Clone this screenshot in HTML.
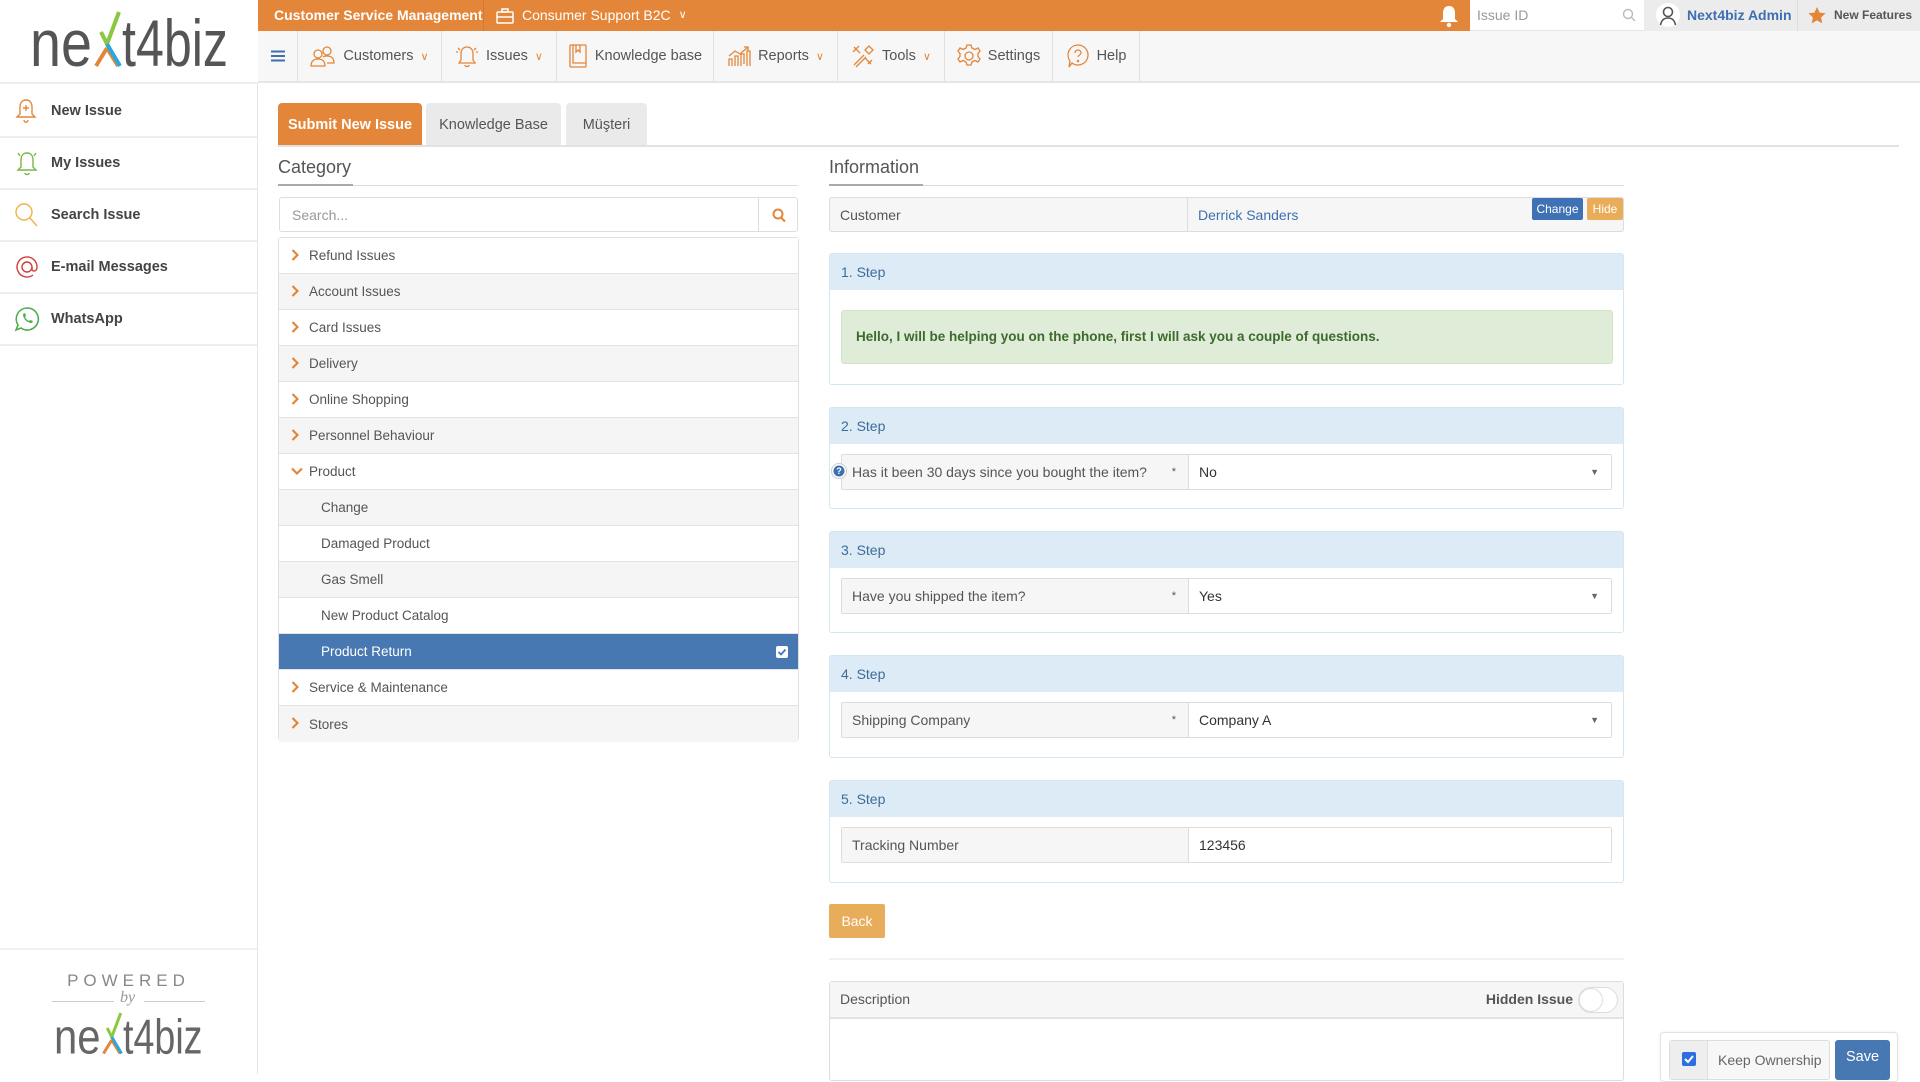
<!DOCTYPE html>
<html><head><meta charset="utf-8">
<style>
*{box-sizing:border-box;margin:0;padding:0}
body{width:1920px;height:1074px;overflow:hidden;background:#fff;font-family:"Liberation Sans",sans-serif;color:#555;position:relative;font-size:14px}
.abs{position:absolute}
.top{left:258px;top:0;width:1212px;height:31px;background:#e4863a}
.nav{left:258px;top:31px;width:1662px;height:52px;background:#f7f7f7;border-bottom:2px solid #e6e6e6}
.ni{position:absolute;top:0;height:50px;border-right:1px solid #e2e2e2;display:flex;align-items:center;justify-content:center;gap:7px;font-size:14.5px;color:#555}
.ni svg{flex:none}
.side{left:0;top:83px;width:258px;height:991px;border-right:1px solid #e6e6e6}
.si{position:absolute;left:0;width:257px;height:52px;border-bottom:2px solid #eee;display:flex;align-items:center;font-size:14.5px;font-weight:bold;color:#444}
.si svg{position:absolute;left:14px}
.si span{position:absolute;left:51px}
.tab{position:absolute;top:103px;height:42px;border-radius:4px 4px 0 0;background:#eaeaea;color:#555;font-size:14.5px;display:flex;align-items:center;justify-content:center;padding-top:2px}
.h{position:absolute;top:157px;font-size:18px;color:#555}
.row{position:absolute;left:279px;width:519px;height:36px;border-bottom:1px solid #e3e3e3;display:flex;align-items:center;font-size:13.5px;color:#555}
.row.g{background:#f5f5f5}.row.w{background:#fff}
.chev{position:absolute;left:12px;top:11px}
.panel{position:absolute;left:829px;width:795px;border:1px solid #d4e6f2;border-radius:3px;background:#fff}
.ph{height:36px;background:#ddebf6;color:#3e6c99;font-size:14px;padding:0 11px;line-height:36px}
.fld{position:absolute;left:11px;width:771px;height:36px;border:1px solid #ddd;border-radius:2px;display:flex}
.fl{width:347px;background:#f6f6f6;border-right:1px solid #ddd;padding-left:10px;line-height:34px;font-size:14px;color:#555;position:relative}
.fl i{position:absolute;right:12px;top:0;font-style:normal;font-size:11px}
.fv{flex:1;padding-left:10px;line-height:34px;font-size:14px;color:#333;position:relative;background:#fff}
.fv b{position:absolute;right:12px;top:0;font-size:9px;color:#666;font-weight:normal}
</style></head><body>

<!-- logo -->
<svg class="abs" style="left:30px;top:8px" width="200" height="64" viewBox="0 0 200 64">
<text x="0" y="58" font-family="Liberation Sans" font-size="66" fill="#555" textLength="62" lengthAdjust="spacingAndGlyphs">ne</text>
<path d="M66 58 L77 40 M77 40 L88 58" stroke="#e4863a" stroke-width="4" fill="none"/>
<path d="M71 24 L77 36 L89 4" stroke="#8dc63f" stroke-width="4" fill="none"/>
<path d="M77 36 L90 58" stroke="#29a8e0" stroke-width="4" fill="none"/>
<text x="92" y="58" font-family="Liberation Sans" font-size="66" fill="#555" textLength="106" lengthAdjust="spacingAndGlyphs">t4biz</text>
</svg>
<div class="abs" style="left:0;top:82px;width:258px;height:2px;background:#eee"></div>

<!-- top bar -->
<div class="abs top"></div>
<div class="abs" style="left:258px;top:0;width:226px;height:31px;border-right:1px solid #d57a30;color:#fff;font-size:14px;font-weight:bold;line-height:31px;padding-left:16px">Customer Service Management</div>
<div class="abs" style="left:496px;top:0;height:31px;color:#fff;font-size:14px;line-height:31px;display:flex;align-items:center;gap:8px">
<svg width="18" height="16"><rect x="1" y="4" width="16" height="11" rx="1" fill="none" stroke="#fff" stroke-width="1.5"/><rect x="6" y="1" width="6" height="3" fill="none" stroke="#fff" stroke-width="1.5"/><path d="M1 9h16" stroke="#fff" stroke-width="1.5"/></svg>
Consumer Support B2C <span style="font-size:11px">&#8744;</span></div>
<svg class="abs" style="left:1438px;top:4px" width="22" height="24"><path d="M11 2c-4 0-6 3-6 7v6l-3 3h18l-3-3V9c0-4-2-7-6-7z" fill="#fff"/><circle cx="11" cy="21" r="2.2" fill="#fff"/></svg>
<div class="abs" style="left:1470px;top:0;width:174px;height:31px;background:#fff;border-bottom:1px solid #e5e5e5;font-size:14px;color:#999;line-height:31px;padding-left:7px">Issue ID
<svg class="abs" style="left:152px;top:8px" width="14" height="14"><circle cx="6" cy="6" r="4.5" fill="none" stroke="#bbb" stroke-width="1.4"/><path d="M9.5 9.5l3.5 3.5" stroke="#bbb" stroke-width="1.4"/></svg></div>
<div class="abs" style="left:1644px;top:0;width:276px;height:31px;background:#ececec"></div>
<div class="abs" style="left:1797px;top:0;width:1px;height:31px;background:#ddd"></div>
<svg class="abs" style="left:1656px;top:3px" width="24" height="25"><circle cx="12" cy="12" r="12" fill="#fff"/><circle cx="12" cy="9" r="4.5" fill="none" stroke="#555" stroke-width="1.6"/><path d="M4.5 22c1-5 4-7 7.5-7s6.5 2 7.5 7" fill="none" stroke="#555" stroke-width="1.6"/></svg>
<div class="abs" style="left:1687px;top:0;line-height:31px;font-size:14px;color:#3e6fb0;font-weight:bold">Next4biz Admin</div>
<svg class="abs" style="left:1808px;top:7px" width="18" height="17"><path d="M9 0l2.6 5.6 6 .7-4.5 4.1 1.2 6L9 13.4 3.7 16.4l1.2-6L.4 6.3l6-.7z" fill="#e4863a"/></svg>
<div class="abs" style="left:1834px;top:0;line-height:31px;font-size:12px;color:#555;font-weight:bold">New Features</div>

<!-- nav -->
<div class="abs nav"></div>
<div class="abs" style="left:258px;top:31px;width:1662px;height:50px">
<div class="ni" style="left:0;width:40px"><svg width="14" height="12"><path d="M0 1.5h14M0 6h14M0 10.5h14" stroke="#3e6fb0" stroke-width="2"/></svg></div>
<div class="ni" style="left:40px;width:144px"><svg width="26" height="22" fill="none" stroke="#e4863a" stroke-width="1.3"><circle cx="8" cy="9" r="4"/><circle cx="17" cy="6" r="4"/><path d="M1 21c0-5 3-7 7-7s7 2 7 7zM13 12c1-1 2-1 4-1 4 0 7 2 7 7h-7"/></svg>Customers <span style="color:#e4863a;font-size:11px">&#8744;</span></div>
<div class="ni" style="left:184px;width:115px"><svg width="24" height="24" fill="none" stroke="#e4863a" stroke-width="1.3"><path d="M12 3c-4 0-6 3-6 7v6l-2 3h16l-2-3v-6c0-4-2-7-6-7zM10 21c0 2 4 2 4 0M3 4l2 2M21 4l-2 2M1 8h2M23 8h-2"/></svg>Issues <span style="color:#e4863a;font-size:11px">&#8744;</span></div>
<div class="ni" style="left:299px;width:157px"><svg width="20" height="24" fill="none" stroke="#e4863a" stroke-width="1.3"><rect x="2" y="1" width="16" height="22" rx="1"/><path d="M5 1v18h13M8 1v7l2-2 2 2V1"/></svg>Knowledge base</div>
<div class="ni" style="left:456px;width:124px"><svg width="24" height="22" fill="none" stroke="#e4863a" stroke-width="1.3"><path d="M2 21V14h3v7M8 21V11h3v10M14 21V9h3v10M20 21V6h3v15M2 11l6-5 5 3 8-7M17 2h4v4"/></svg>Reports <span style="color:#e4863a;font-size:11px">&#8744;</span></div>
<div class="ni" style="left:580px;width:107px"><svg width="24" height="24" fill="none" stroke="#e4863a" stroke-width="1.3"><path d="M3 21l10-10M5 23l10-10M14 6l4-4 4 4-4 4zM3 3l6 6M8 2l-6 6M20 20l-6-6M21 16l-4 4"/></svg>Tools <span style="color:#e4863a;font-size:11px">&#8744;</span></div>
<div class="ni" style="left:687px;width:108px"><svg width="24" height="24" fill="none" stroke="#e4863a" stroke-width="1.3"><circle cx="12" cy="12" r="4"/><path d="M10 1h4l1 3 3 1.5 3-1.5 2 3-2 2.5v3l2 2.5-2 3-3-1.5-3 1.5-1 3h-4l-1-3-3-1.5-3 1.5-2-3 2-2.5v-3L1 7l2-3 3 1.5L9 4z"/></svg>Settings</div>
<div class="ni" style="left:795px;width:87px"><svg width="24" height="24" fill="none" stroke="#e4863a" stroke-width="1.3"><path d="M12 1a10 10 0 1 1-6 18l-3 4 1-6A10 10 0 0 1 12 1z"/><path d="M9 9c0-2 1.5-3 3-3s3 1 3 3-3 2-3 4"/><circle cx="12" cy="17" r=".6" fill="#e4863a"/></svg>Help</div>
</div>

<!-- sidebar -->
<div class="abs side">
<div class="si" style="top:3px"><svg width="24" height="26" fill="none" stroke="#e4863a" stroke-width="1.4"><path d="M12 2c-4 0-6 3-6 7v7l-3 3h18l-3-3V9c0-4-2-7-6-7zM10 22c0 3 4 3 4 0M12 7v6M9 10h6"/></svg><span>New Issue</span></div>
<div class="si" style="top:55px"><svg width="26" height="26" fill="none" stroke="#7ab648" stroke-width="1.4"><path d="M13 3c-4 0-6 3-6 7v7l-3 3h18l-3-3v-7c0-4-2-7-6-7zM11 23c0 2 4 2 4 0M4 3l2 3M22 3l-2 3"/></svg><span>My Issues</span></div>
<div class="si" style="top:107px"><svg width="26" height="26" fill="none" stroke="#f0b24a" stroke-width="1.4"><circle cx="10" cy="10" r="8"/><path d="M16 16l7 8"/></svg><span>Search Issue</span></div>
<div class="si" style="top:159px"><svg width="26" height="26" fill="none" stroke="#d23c3c" stroke-width="1.4"><circle cx="13" cy="13" r="5"/><path d="M18 13v2c0 3 5 3 5-2a10 10 0 1 0-4 8"/></svg><span>E-mail Messages</span></div>
<div class="si" style="top:211px"><svg width="26" height="26" fill="none" stroke="#4cae4c" stroke-width="1.6"><path d="M13 2a11 11 0 1 1-6 20l-5 2 2-5A11 11 0 0 1 13 2z"/><path d="M9 8c0 5 4 9 9 9l1-2-3-1-1 1c-2-1-3-2-4-4l1-1-1-3z" fill="#4cae4c" stroke="none"/></svg><span>WhatsApp</span></div>
<div class="abs" style="left:0;top:865px;width:257px;height:2px;background:#f0f0f0"></div>
<div class="abs" style="left:0;top:888px;width:257px;text-align:center;font-size:17px;letter-spacing:5px;color:#888">POWERED</div>
<div class="abs" style="left:52px;top:918px;width:62px;height:1px;background:#ccc"></div>
<div class="abs" style="left:144px;top:918px;width:61px;height:1px;background:#ccc"></div>
<div class="abs" style="left:120px;top:906px;font-family:'Liberation Serif',serif;font-style:italic;font-size:16px;color:#999">by</div>
<svg class="abs" style="left:54px;top:926px" width="150" height="50" viewBox="0 0 200 64">
<text x="0" y="58" font-family="Liberation Sans" font-size="66" fill="#666" textLength="62" lengthAdjust="spacingAndGlyphs">ne</text>
<path d="M66 58 L77 40 M77 40 L88 58" stroke="#e4863a" stroke-width="4" fill="none"/>
<path d="M71 24 L77 36 L89 4" stroke="#8dc63f" stroke-width="4" fill="none"/>
<path d="M77 36 L90 58" stroke="#29a8e0" stroke-width="4" fill="none"/>
<text x="92" y="58" font-family="Liberation Sans" font-size="66" fill="#666" textLength="106" lengthAdjust="spacingAndGlyphs">t4biz</text>
</svg>
</div>

<!-- tabs -->
<div class="tab" style="left:278px;width:144px;background:#e4863a;color:#fff;font-weight:bold">Submit New Issue</div>
<div class="tab" style="left:426px;width:135px">Knowledge Base</div>
<div class="tab" style="left:566px;width:81px">Müşteri</div>
<div class="abs" style="left:278px;top:145px;width:1621px;height:2px;background:#e2e2e2"></div>

<!-- category -->
<div class="h" style="left:278px">Category</div>
<div class="abs" style="left:278px;top:185px;width:520px;height:1px;background:#ddd"></div>
<div class="abs" style="left:278px;top:184px;width:75px;height:2px;background:#aaa"></div>
<div class="abs" style="left:279px;top:197px;width:519px;height:35px;border:1px solid #ddd;border-radius:3px;background:#fff">
<div class="abs" style="left:12px;top:9px;font-size:14px;color:#999">Search...</div>
<div class="abs" style="left:478px;top:0;width:1px;height:33px;background:#ddd"></div>
<svg class="abs" style="left:492px;top:10px" width="14" height="15"><circle cx="6" cy="6" r="4.5" fill="none" stroke="#e4863a" stroke-width="2"/><path d="M9 9.5l4 4" stroke="#e4863a" stroke-width="2"/></svg>
</div>
<div class="abs" style="left:278px;top:237px;width:521px;height:504px;border:1px solid #e0e0e0;border-radius:3px"></div>
<div class="row w" style="top:238px"><svg class="chev" width="8" height="12"><path d="M1.5 1l5 5-5 5" stroke="#e4863a" stroke-width="2.2" fill="none"/></svg><span style="margin-left:30px">Refund Issues</span></div>
<div class="row g" style="top:274px"><svg class="chev" width="8" height="12"><path d="M1.5 1l5 5-5 5" stroke="#e4863a" stroke-width="2.2" fill="none"/></svg><span style="margin-left:30px">Account Issues</span></div>
<div class="row w" style="top:310px"><svg class="chev" width="8" height="12"><path d="M1.5 1l5 5-5 5" stroke="#e4863a" stroke-width="2.2" fill="none"/></svg><span style="margin-left:30px">Card Issues</span></div>
<div class="row g" style="top:346px"><svg class="chev" width="8" height="12"><path d="M1.5 1l5 5-5 5" stroke="#e4863a" stroke-width="2.2" fill="none"/></svg><span style="margin-left:30px">Delivery</span></div>
<div class="row w" style="top:382px"><svg class="chev" width="8" height="12"><path d="M1.5 1l5 5-5 5" stroke="#e4863a" stroke-width="2.2" fill="none"/></svg><span style="margin-left:30px">Online Shopping</span></div>
<div class="row g" style="top:418px"><svg class="chev" width="8" height="12"><path d="M1.5 1l5 5-5 5" stroke="#e4863a" stroke-width="2.2" fill="none"/></svg><span style="margin-left:30px">Personnel Behaviour</span></div>
<div class="row w" style="top:454px"><svg class="chev" width="12" height="10" style="left:12px;top:13px"><path d="M1 1.5l5 5 5-5" stroke="#e4863a" stroke-width="2.2" fill="none"/></svg><span style="margin-left:30px">Product</span></div>
<div class="row g" style="top:490px"><span style="margin-left:42px">Change</span></div>
<div class="row w" style="top:526px"><span style="margin-left:42px">Damaged Product</span></div>
<div class="row g" style="top:562px"><span style="margin-left:42px">Gas Smell</span></div>
<div class="row w" style="top:598px"><span style="margin-left:42px">New Product Catalog</span></div>
<div class="row" style="top:634px;background:#4778b1;color:#fff"><span style="margin-left:42px">Product Return</span><svg class="abs" style="left:497px;top:12px" width="12" height="12"><rect width="12" height="12" rx="2" fill="#fff"/><path d="M2.5 6l2.5 2.5 4.5-5" stroke="#4778b1" stroke-width="1.8" fill="none"/></svg></div>
<div class="row w" style="top:670px"><svg class="chev" width="8" height="12"><path d="M1.5 1l5 5-5 5" stroke="#e4863a" stroke-width="2.2" fill="none"/></svg><span style="margin-left:30px">Service &amp; Maintenance</span></div>
<div class="row g" style="top:706px;border-bottom:none"><svg class="chev" width="8" height="12"><path d="M1.5 1l5 5-5 5" stroke="#e4863a" stroke-width="2.2" fill="none"/></svg><span style="margin-left:30px">Stores</span></div>

<!-- information -->
<div class="h" style="left:829px">Information</div>
<div class="abs" style="left:829px;top:185px;width:795px;height:1px;background:#ddd"></div>
<div class="abs" style="left:829px;top:184px;width:94px;height:2px;background:#aaa"></div>
<div class="abs" style="left:829px;top:197px;width:795px;height:35px;border:1px solid #ddd;border-radius:3px;background:#f6f6f6">
<div class="abs" style="left:10px;top:9px;font-size:14px;color:#555">Customer</div>
<div class="abs" style="left:357px;top:0;width:1px;height:33px;background:#ddd"></div>
<div class="abs" style="left:368px;top:9px;font-size:14px;color:#3e6fb0">Derrick Sanders</div>
<div class="abs" style="left:702px;top:0;width:51px;height:22px;background:#3e72b5;border-radius:2px;color:#fff;font-size:12px;text-align:center;line-height:22px">Change</div>
<div class="abs" style="left:757px;top:0;width:36px;height:22px;background:#e9ad5a;border-radius:2px;color:#fff;font-size:12px;text-align:center;line-height:22px">Hide</div>
</div>

<div class="panel" style="top:253px;height:132px"><div class="ph">1. Step</div>
<div class="abs" style="left:11px;top:56px;width:772px;height:54px;background:#dfecd7;border:1px solid #d3e5c8;border-radius:3px;color:#3d6a2e;font-weight:bold;font-size:13.5px;line-height:52px;padding-left:14px">Hello, I will be helping you on the phone, first I will ask you a couple of questions.</div></div>

<div class="panel" style="top:407px;height:102px"><div class="ph">2. Step</div>
<div class="fld" style="top:46px"><div class="fl">Has it been 30 days since you bought the item?<i>*</i></div><div class="fv">No<b>&#9660;</b></div></div>
<svg class="abs" style="left:1px;top:55px" width="16" height="16"><circle cx="8" cy="8" r="7.5" fill="#fff" stroke="#ccc"/><circle cx="8" cy="8" r="5.5" fill="#3e6fb0"/><text x="8" y="11" font-size="9" fill="#fff" text-anchor="middle" font-weight="bold" font-family="Liberation Sans">?</text></svg>
</div>

<div class="panel" style="top:531px;height:102px"><div class="ph">3. Step</div>
<div class="fld" style="top:46px"><div class="fl">Have you shipped the item?<i>*</i></div><div class="fv">Yes<b>&#9660;</b></div></div></div>

<div class="panel" style="top:655px;height:103px"><div class="ph">4. Step</div>
<div class="fld" style="top:46px"><div class="fl">Shipping Company<i>*</i></div><div class="fv">Company A<b>&#9660;</b></div></div></div>

<div class="panel" style="top:780px;height:103px"><div class="ph">5. Step</div>
<div class="fld" style="top:46px"><div class="fl">Tracking Number</div><div class="fv">123456</div></div></div>

<div class="abs" style="left:829px;top:904px;width:56px;height:34px;background:#e8ad5b;border-radius:2px;color:#fff;font-size:14px;text-align:center;line-height:34px">Back</div>
<div class="abs" style="left:829px;top:958px;width:795px;height:2px;background:#f1f1f1"></div>

<div class="abs" style="left:829px;top:981px;width:795px;height:100px;border:1px solid #ddd;border-radius:3px;background:#fff">
<div style="height:37px;background:#f6f6f6;border-bottom:2px solid #e3e3e3;padding-left:10px;line-height:35px;font-size:14px;color:#555">Description</div>
<div class="abs" style="right:50px;top:9px;font-size:14px;font-weight:bold;color:#555">Hidden Issue</div>
<div class="abs" style="left:748px;top:5px;width:40px;height:26px;border:1px solid #ddd;border-radius:13px;background:#fff"><div style="width:24px;height:24px;border-radius:12px;border:1px solid #ddd;background:#fff"></div></div>
</div>

<!-- keep ownership -->
<div class="abs" style="left:1660px;top:1032px;width:238px;height:50px;border:1px solid #e3e3e3;border-radius:4px;background:#fff;box-shadow:0 0 3px rgba(0,0,0,.08)"></div>
<div class="abs" style="left:1669px;top:1040px;width:161px;height:40px;border:1px solid #ddd;border-radius:3px;background:#f7f7f7">
<div class="abs" style="left:0;top:0;width:38px;height:38px;background:#eee;border-right:1px solid #ddd"></div>
<svg class="abs" style="left:12px;top:11px" width="14" height="14"><rect width="14" height="14" rx="2" fill="#2b6fe0"/><path d="M3 7l3 3 5-6" stroke="#fff" stroke-width="2" fill="none"/></svg>
<div class="abs" style="left:48px;top:11px;font-size:14px;color:#666">Keep Ownership</div>
</div>
<div class="abs" style="left:1835px;top:1040px;width:55px;height:40px;background:#4778b1;border-radius:3px;color:#fff;font-size:14.5px;text-align:center;line-height:34px">Save</div>
</body></html>
